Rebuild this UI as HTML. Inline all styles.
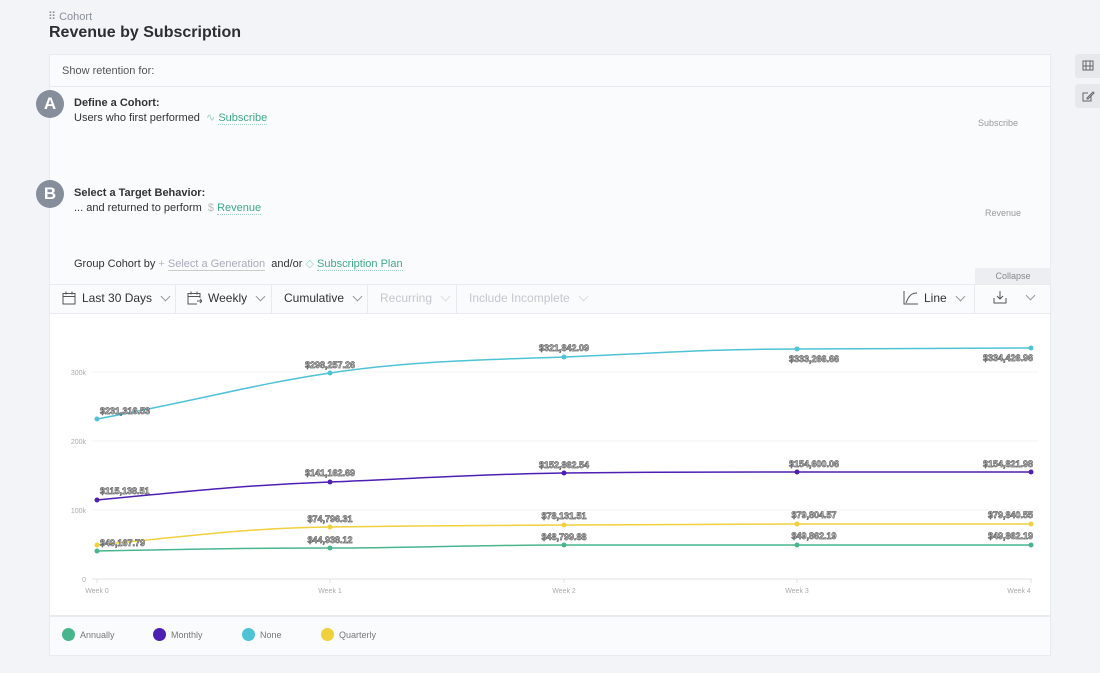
<!DOCTYPE html>
<html><head><meta charset="utf-8"><style>
*{box-sizing:border-box;margin:0;padding:0}
body{width:1100px;height:673px;background:#f3f4f7;font-family:"Liberation Sans",sans-serif;color:#333;position:relative;overflow:hidden}
.a{position:absolute}
.panel{left:49px;top:54px;width:1002px;height:602px;background:#fafbfc;border:1px solid #e8eaee}
.badge{width:28px;height:28px;border-radius:50%;background:#868d9b;color:#fff;font-size:17px;text-align:center;line-height:28px;font-weight:bold}
.g{color:#3faa86;border-bottom:1px dotted #9fd3c1}
.tb{font-size:12px;color:#333;display:flex;align-items:center;gap:6px}
.chev{width:7px;height:7px;border-right:1px solid #999;border-bottom:1px solid #999;transform:rotate(45deg);margin:-4px 0 0 4px}
.sep{top:284px;width:1px;height:29px;background:#e8eaee}
.side{left:1075px;width:25px;height:24px;background:#e6e8ec;border-radius:3px 0 0 3px}
.lg{font-size:9px;color:#777;display:flex;align-items:center;gap:5px}
.lg i{display:inline-block;width:13px;height:13px;border-radius:50%}
</style></head><body>
<div class="a" style="left:48px;top:10px;font-size:11px;color:#8a8f99">⠿ Cohort</div>
<div class="a" style="left:49px;top:24px;font-size:16px;font-weight:bold;color:#2b2e33">Revenue by Subscription</div>
<div class="a side" style="top:54px"><svg width="25" height="24"><g fill="none" stroke="#666" stroke-width="1"><rect x="8" y="7" width="10" height="9"/><path d="M11 7v9M15 7v9M8 12h10"/></g></svg></div>
<div class="a side" style="top:84px"><svg width="25" height="24"><g fill="none" stroke="#666" stroke-width="1"><path d="M16 12v5H8V9h5M12 14l6-6 1 1-6 6h-1z"/></g></svg></div>
<div class="a panel"></div>
<div class="a" style="left:50px;top:86px;width:1000px;height:1px;background:#e8eaee"></div>
<div class="a" style="left:62px;top:65px;font-size:11px;color:#555">Show retention for:</div>
<div class="a badge" style="left:36px;top:90px">A</div>
<div class="a" style="left:74px;top:97px;font-size:11px;font-weight:bold;color:#333">Define a Cohort:</div>
<div class="a" style="left:74px;top:111px;font-size:11px;color:#333">Users who first performed <span style="color:#9fd3c1">&nbsp;∿</span> <span class="g">Subscribe</span></div>
<div class="a" style="left:978px;top:118px;font-size:9px;color:#999">Subscribe</div>
<div class="a badge" style="left:36px;top:180px">B</div>
<div class="a" style="left:74px;top:187px;font-size:11px;font-weight:bold;color:#333">Select a Target Behavior:</div>
<div class="a" style="left:74px;top:202px;font-size:11px;color:#333">... and returned to perform <span style="color:#bbb">&nbsp;$</span> <span class="g">Revenue</span></div>
<div class="a" style="left:985px;top:208px;font-size:9px;color:#999">Revenue</div>
<div class="a" style="left:74px;top:257px;font-size:11px;color:#333">Group Cohort by <span style="color:#bbb">+</span> <span style="color:#aab;border-bottom:1px solid #ccc">Select a Generation</span> &nbsp;and/or <span style="color:#9fd3c1">◇</span> <span class="g">Subscription Plan</span></div>
<div class="a" style="left:975px;top:268px;width:76px;height:16px;background:#eceef1;font-size:9px;color:#888;text-align:center;line-height:16px">Collapse</div>
<div class="a" style="left:50px;top:284px;width:1000px;height:1px;background:#e8eaee"></div>
<div class="a" style="left:50px;top:313px;width:1000px;height:302px;background:#fff;border-top:1px solid #e8eaee"></div>
<div class="a tb" style="left:62px;top:291px"><svg width="14" height="14"><g fill="none" stroke="#555"><rect x="1" y="2.5" width="12" height="10.5"/><path d="M1 5.5h12M4 0.5v3M10 0.5v3"/></g></svg>Last 30 Days<span class="chev"></span></div>
<div class="a sep" style="left:175px"></div>
<div class="a tb" style="left:187px;top:291px"><svg width="15" height="14"><g fill="none" stroke="#555"><path d="M13 7V2.5H1V13h9M1 5.5h12M4 0.5v3M10 0.5v3M10 10h5M13 8l2 2-2 2"/></g></svg>Weekly<span class="chev"></span></div>
<div class="a sep" style="left:271px"></div>
<div class="a tb" style="left:284px;top:291px">Cumulative<span class="chev"></span></div>
<div class="a sep" style="left:367px"></div>
<div class="a tb" style="left:380px;top:291px;color:#c4c7cc">Recurring<span class="chev" style="border-color:#ddd"></span></div>
<div class="a sep" style="left:456px"></div>
<div class="a tb" style="left:469px;top:291px;color:#c4c7cc">Include Incomplete<span class="chev" style="border-color:#ddd"></span></div>
<div class="a tb" style="left:903px;top:291px"><svg width="15" height="14"><path d="M1 0v13h14M3 12C6 4 9 2 14 2" fill="none" stroke="#555"/></svg>Line<span class="chev"></span></div>
<div class="a sep" style="left:974px"></div>
<div class="a tb" style="left:993px;top:290px"><svg width="14" height="14"><path d="M1 8v5h12V8M7 1v8M4 6l3 3 3-3" fill="none" stroke="#555"/></svg><span class="chev" style="margin-left:14px"></span></div>
<svg class="a" style="left:0;top:0" width="1100" height="673">
<g font-size="7" fill="#aaa" font-family="Liberation Sans">
<text x="86" y="375" text-anchor="end">300k</text><text x="86" y="444" text-anchor="end">200k</text><text x="86" y="513" text-anchor="end">100k</text><text x="86" y="582" text-anchor="end">0</text>
<text x="97" y="593" text-anchor="middle">Week 0</text><text x="330" y="593" text-anchor="middle">Week 1</text><text x="564" y="593" text-anchor="middle">Week 2</text><text x="797" y="593" text-anchor="middle">Week 3</text><text x="1019" y="593" text-anchor="middle">Week 4</text></g>
<g stroke="#f2f3f5"><path d="M92 372H1038M92 441H1038M92 510H1038"/></g>
<path d="M92 579H1032" stroke="#dde0e5"/>
<g stroke="#dde0e5"><path d="M97 579v4M330 579v4M564 579v4M797 579v4M1031 579v4"/></g>
<g fill="none" stroke-width="1.5">
<path d="M97 419C200 400 250 385 330 373S480 360 564 357S700 349 797 349S950 348 1031 348" stroke="#4ec3d6"/>
<path d="M97 500C200 490 250 485 330 482S480 474 564 473S700 472 797 472S950 472 1031 472" stroke="#4d1fb3"/>
<path d="M97 545C200 535 250 528 330 527S480 525 564 525S700 524 797 524S950 524 1031 524" stroke="#f0d03c"/>
<path d="M97 551C200 549 250 548 330 548S480 545 564 545S700 545 797 545S950 545 1031 545" stroke="#49b58d"/>
</g>
<g fill="#4ec3d6"><circle cx="97" cy="419" r="2.5"/><circle cx="330" cy="373" r="2.5"/><circle cx="564" cy="357" r="2.5"/><circle cx="797" cy="349" r="2.5"/><circle cx="1031" cy="348" r="2.5"/></g>
<g fill="#4d1fb3"><circle cx="97" cy="500" r="2.5"/><circle cx="330" cy="482" r="2.5"/><circle cx="564" cy="473" r="2.5"/><circle cx="797" cy="472" r="2.5"/><circle cx="1031" cy="472" r="2.5"/></g>
<g fill="#f0d03c"><circle cx="97" cy="545" r="2.5"/><circle cx="330" cy="527" r="2.5"/><circle cx="564" cy="525" r="2.5"/><circle cx="797" cy="524" r="2.5"/><circle cx="1031" cy="524" r="2.5"/></g>
<g fill="#49b58d"><circle cx="97" cy="551" r="2.5"/><circle cx="330" cy="548" r="2.5"/><circle cx="564" cy="545" r="2.5"/><circle cx="797" cy="545" r="2.5"/><circle cx="1031" cy="545" r="2.5"/></g>
<g font-size="9" font-weight="bold" fill="#e8e8ee" stroke="#666" stroke-width="0.7" font-family="Liberation Sans">
<text x="100" y="414">$231,316.53</text><text x="330" y="368" text-anchor="middle">$298,257.26</text><text x="564" y="351" text-anchor="middle">$321,842.09</text><text x="814" y="362" text-anchor="middle">$333,266.66</text><text x="1033" y="361" text-anchor="end">$334,426.96</text>
<text x="100" y="494">$115,138.51</text><text x="330" y="476" text-anchor="middle">$141,162.69</text><text x="564" y="468" text-anchor="middle">$152,862.54</text><text x="814" y="467" text-anchor="middle">$154,600.06</text><text x="1033" y="467" text-anchor="end">$154,821.98</text>
<text x="100" y="546">$49,167.79</text><text x="330" y="522" text-anchor="middle">$74,796.31</text><text x="564" y="519" text-anchor="middle">$78,131.51</text><text x="814" y="518" text-anchor="middle">$79,804.57</text><text x="1033" y="518" text-anchor="end">$79,840.55</text>
<text x="330" y="543" text-anchor="middle">$44,938.12</text><text x="564" y="540" text-anchor="middle">$48,799.88</text><text x="814" y="539" text-anchor="middle">$49,862.19</text><text x="1033" y="539" text-anchor="end">$49,862.19</text>
</g>
</svg>
<div class="a" style="left:50px;top:615px;width:1000px;height:2px;background:#e8eaee"></div>
<div class="a lg" style="left:62px;top:628px"><i style="background:#49b58d"></i>Annually</div>
<div class="a lg" style="left:153px;top:628px"><i style="background:#4d1fb3"></i>Monthly</div>
<div class="a lg" style="left:242px;top:628px"><i style="background:#4ec3d6"></i>None</div>
<div class="a lg" style="left:321px;top:628px"><i style="background:#f0d03c"></i>Quarterly</div>
</body></html>
